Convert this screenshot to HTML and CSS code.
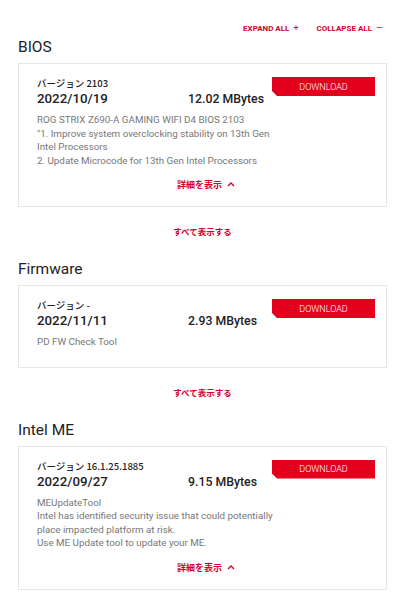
FILE: index.html
```html
<!DOCTYPE html>
<html lang="ja">
<head>
<meta charset="utf-8">
<link rel="stylesheet" href="styles.css">
</head>
<body>
<div class="page">
  <div class="toolbar">
    <a class="tool-link">EXPAND ALL <span class="sym">+</span></a>
    <a class="tool-link">COLLAPSE ALL <span class="sym">—</span></a>
  </div>

  <section class="group">
    <h2 class="group-title">BIOS</h2>
    <div class="card">
      <div class="card-head">
        <div class="info">
          <div class="version">バージョン 2103</div>
          <div class="meta"><span class="date">2022/10/19</span><span class="size">12.02 MBytes</span></div>
        </div>
        <a class="dl-btn">DOWNLOAD</a>
      </div>
      <div class="desc">ROG STRIX Z690-A GAMING WIFI D4 BIOS 2103<br>"1. Improve system overclocking stability on 13th Gen<br>Intel Processors<br>2. Update Microcode for 13th Gen Intel Processors</div>
      <div class="detail">詳細を表示 <span class="caret"><svg width="8" height="6" viewBox="0 0 8 6"><path d="M1 5 L4 2 L7 5" fill="none" stroke="currentColor" stroke-width="1.4"/></svg></span></div>
    </div>
    <div class="show-all">すべて表示する</div>
  </section>

  <section class="group">
    <h2 class="group-title">Firmware</h2>
    <div class="card card-plain">
      <div class="card-head">
        <div class="info">
          <div class="version">バージョン -</div>
          <div class="meta"><span class="date">2022/11/11</span><span class="size">2.93 MBytes</span></div>
        </div>
        <a class="dl-btn">DOWNLOAD</a>
      </div>
      <div class="desc">PD FW Check Tool</div>
    </div>
    <div class="show-all">すべて表示する</div>
  </section>

  <section class="group">
    <h2 class="group-title">Intel ME</h2>
    <div class="card">
      <div class="card-head">
        <div class="info">
          <div class="version">バージョン 16.1.25.1885</div>
          <div class="meta"><span class="date">2022/09/27</span><span class="size">9.15 MBytes</span></div>
        </div>
        <a class="dl-btn">DOWNLOAD</a>
      </div>
      <div class="desc">MEUpdateTool<br>Intel has identified security issue that could potentially<br>place impacted platform at risk.<br>Use ME Update tool to update your ME.</div>
      <div class="detail">詳細を表示 <span class="caret"><svg width="8" height="6" viewBox="0 0 8 6"><path d="M1 5 L4 2 L7 5" fill="none" stroke="currentColor" stroke-width="1.4"/></svg></span></div>
    </div>
  </section>
</div>
</body>
</html>
```

FILE: styles.css
```css
* { box-sizing: border-box; }
html, body { margin: 0; padding: 0; background: #fff; }
body {
  font-family: Roboto, "Noto Sans CJK JP", sans-serif;
  color: #222;
}
.page {
  padding: 22px 16px 0 18px;
}
.toolbar {
  display: flex;
  justify-content: flex-end;
  gap: 18px;
  padding-right: 4px;
  height: 14px;
}
.tool-link {
  color: #d3002a;
  font-size: 8px;
  font-weight: 700;
  line-height: 12px;
}
.tool-link .sym { font-weight: 400; font-size: 9px; margin-left: 2px; }
.group-title {
  margin: 0;
  font-size: 15.5px;
  font-weight: 400;
  line-height: 22px;
  color: #222;
}
.group + .group .group-title { margin-top: 21px; }
.card {
  margin-top: 5px;
  border: 1px solid #e7e7e7;
  padding: 12px 11px 14px 18px;
}
.card-plain { padding-bottom: 18px; }
.card-head {
  display: flex;
  justify-content: space-between;
  align-items: flex-start;
}
.version {
  font-family: "Noto Sans CJK JP", sans-serif;
  font-size: 9.5px;
  font-weight: 500;
  line-height: 14px;
  color: #222;
}
.meta {
  display: flex;
  font-size: 13.3px;
  font-weight: 500;
  line-height: 18px;
  color: #222;
}
.date { width: 151px; }
.size { font-size: 12.3px; }
.dl-btn {
  display: flex;
  align-items: center;
  justify-content: center;
  width: 103px;
  height: 19px;
  margin-top: 1px;
  background: #e2001c;
  color: #fff;
  font-size: 9px;
  font-weight: 300;
  clip-path: polygon(0 0, 100% 0, 100% 100%, 5px 100%, 0 calc(100% - 5px));
}
.desc {
  margin-top: 5px;
  font-size: 9.8px;
  line-height: 13.5px;
  color: #777;
}
.detail {
  margin-top: 10px;
  text-align: center;
  font-family: "Noto Sans CJK JP", sans-serif;
  font-size: 9px;
  font-weight: 700;
  line-height: 14px;
  color: #d3002a;
}
.caret { display: inline-block; margin-left: 3px; vertical-align: 1px; }
.show-all {
  margin-top: 18px;
  text-align: center;
  font-family: "Noto Sans CJK JP", sans-serif;
  font-size: 8.5px;
  font-weight: 700;
  line-height: 12px;
  color: #d3002a;
}
```
